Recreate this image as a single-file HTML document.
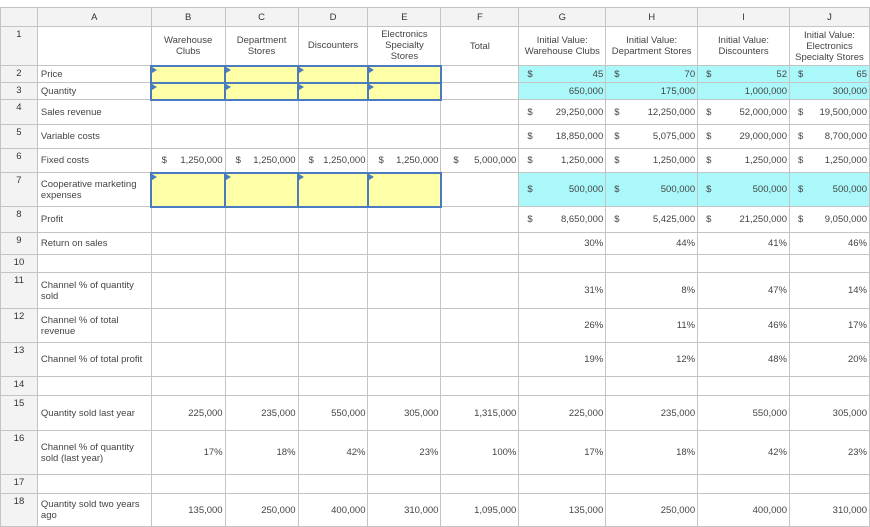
<!DOCTYPE html>
<html><head><meta charset="utf-8"><style>
body{margin:0;background:#fff;width:870px;height:526px;overflow:hidden;font-family:"Liberation Sans",Arial,sans-serif;font-size:9.5px;color:#444}
table{position:absolute;top:7px;left:0;border-collapse:collapse;table-layout:fixed}
td{border:1px solid #c4c4c4;padding:0 2px;vertical-align:middle;white-space:nowrap;overflow:hidden;line-height:11px}
tr.h td{background:#f3f3f3;text-align:center;color:#333;font-size:9.5px}
td.r{background:#f3f3f3;vertical-align:top;text-align:center;padding-top:2px;color:#333;font-size:9.5px}
td.l{white-space:normal;text-align:left;padding-left:3px}
td.c{text-align:center;white-space:normal}
td.n{text-align:right}
.m{display:flex;justify-content:space-between;padding-left:6px}
td.y{background:#ffffa8;border:2px solid #4a7bbf;position:relative}
td.y:before{content:"";position:absolute;left:0;top:0;border-left:5px solid #4a7bbf;border-top:3px solid transparent;border-bottom:3px solid transparent;height:0}
td.cy{background:#aaf8fa}
</style></head><body>
<table>
<colgroup><col style="width:37px"><col style="width:114px"><col style="width:74px"><col style="width:73px"><col style="width:70px"><col style="width:73px"><col style="width:78px"><col style="width:87px"><col style="width:92px"><col style="width:92px"><col style="width:80px"></colgroup>
<tr class="h" style="height:19px"><td></td><td>A</td><td>B</td><td>C</td><td>D</td><td>E</td><td>F</td><td>G</td><td>H</td><td>I</td><td>J</td></tr>
<tr style="height:39px"><td class="r">1</td><td></td><td class="c">Warehouse<br>Clubs</td><td class="c">Department<br>Stores</td><td class="c">Discounters</td><td class="c">Electronics<br>Specialty<br>Stores</td><td class="c">Total</td><td class="c">Initial Value:<br>Warehouse Clubs</td><td class="c">Initial Value:<br>Department Stores</td><td class="c">Initial Value:<br>Discounters</td><td class="c">Initial Value:<br>Electronics<br>Specialty Stores</td></tr>
<tr style="height:17px"><td class="r">2</td><td class="l">Price</td><td class="y"></td><td class="y"></td><td class="y"></td><td class="y"></td><td></td><td class="cy"><div class="m" style="padding-left:6px"><span>$</span><span>45</span></div></td><td class="cy"><div class="m" style="padding-left:6px"><span>$</span><span>70</span></div></td><td class="cy"><div class="m" style="padding-left:6px"><span>$</span><span>52</span></div></td><td class="cy"><div class="m" style="padding-left:6px"><span>$</span><span>65</span></div></td></tr>
<tr style="height:17px"><td class="r">3</td><td class="l">Quantity</td><td class="y"></td><td class="y"></td><td class="y"></td><td class="y"></td><td></td><td class="cy n">650,000</td><td class="cy n">175,000</td><td class="cy n">1,000,000</td><td class="cy n">300,000</td></tr>
<tr style="height:25px"><td class="r">4</td><td class="l">Sales revenue</td><td></td><td></td><td></td><td></td><td></td><td><div class="m"><span>$</span><span>29,250,000</span></div></td><td><div class="m"><span>$</span><span>12,250,000</span></div></td><td><div class="m"><span>$</span><span>52,000,000</span></div></td><td><div class="m"><span>$</span><span>19,500,000</span></div></td></tr>
<tr style="height:24px"><td class="r">5</td><td class="l">Variable costs</td><td></td><td></td><td></td><td></td><td></td><td><div class="m"><span>$</span><span>18,850,000</span></div></td><td><div class="m"><span>$</span><span>5,075,000</span></div></td><td><div class="m"><span>$</span><span>29,000,000</span></div></td><td><div class="m"><span>$</span><span>8,700,000</span></div></td></tr>
<tr style="height:24px"><td class="r">6</td><td class="l">Fixed costs</td><td><div class="m" style="padding-left:8px"><span>$</span><span>1,250,000</span></div></td><td><div class="m" style="padding-left:8px"><span>$</span><span>1,250,000</span></div></td><td><div class="m" style="padding-left:8px"><span>$</span><span>1,250,000</span></div></td><td><div class="m" style="padding-left:8px"><span>$</span><span>1,250,000</span></div></td><td><div class="m" style="padding-left:10px"><span>$</span><span>5,000,000</span></div></td><td><div class="m"><span>$</span><span>1,250,000</span></div></td><td><div class="m"><span>$</span><span>1,250,000</span></div></td><td><div class="m"><span>$</span><span>1,250,000</span></div></td><td><div class="m"><span>$</span><span>1,250,000</span></div></td></tr>
<tr style="height:34px"><td class="r">7</td><td class="l">Cooperative marketing expenses</td><td class="y"></td><td class="y"></td><td class="y"></td><td class="y"></td><td></td><td class="cy"><div class="m"><span>$</span><span>500,000</span></div></td><td class="cy"><div class="m"><span>$</span><span>500,000</span></div></td><td class="cy"><div class="m"><span>$</span><span>500,000</span></div></td><td class="cy"><div class="m"><span>$</span><span>500,000</span></div></td></tr>
<tr style="height:26px"><td class="r">8</td><td class="l">Profit</td><td></td><td></td><td></td><td></td><td></td><td><div class="m"><span>$</span><span>8,650,000</span></div></td><td><div class="m"><span>$</span><span>5,425,000</span></div></td><td><div class="m"><span>$</span><span>21,250,000</span></div></td><td><div class="m"><span>$</span><span>9,050,000</span></div></td></tr>
<tr style="height:22px"><td class="r">9</td><td class="l">Return on sales</td><td></td><td></td><td></td><td></td><td></td><td class="n">30%</td><td class="n">44%</td><td class="n">41%</td><td class="n">46%</td></tr>
<tr style="height:18px"><td class="r">10</td><td></td><td></td><td></td><td></td><td></td><td></td><td></td><td></td><td></td><td></td></tr>
<tr style="height:36px"><td class="r">11</td><td class="l">Channel % of quantity sold</td><td></td><td></td><td></td><td></td><td></td><td class="n">31%</td><td class="n">8%</td><td class="n">47%</td><td class="n">14%</td></tr>
<tr style="height:34px"><td class="r">12</td><td class="l">Channel % of total revenue</td><td></td><td></td><td></td><td></td><td></td><td class="n">26%</td><td class="n">11%</td><td class="n">46%</td><td class="n">17%</td></tr>
<tr style="height:34px"><td class="r">13</td><td class="l">Channel % of total profit</td><td></td><td></td><td></td><td></td><td></td><td class="n">19%</td><td class="n">12%</td><td class="n">48%</td><td class="n">20%</td></tr>
<tr style="height:19px"><td class="r">14</td><td></td><td></td><td></td><td></td><td></td><td></td><td></td><td></td><td></td><td></td></tr>
<tr style="height:35px"><td class="r">15</td><td class="l">Quantity sold last year</td><td class="n">225,000</td><td class="n">235,000</td><td class="n">550,000</td><td class="n">305,000</td><td class="n">1,315,000</td><td class="n">225,000</td><td class="n">235,000</td><td class="n">550,000</td><td class="n">305,000</td></tr>
<tr style="height:44px"><td class="r">16</td><td class="l">Channel % of quantity sold (last year)</td><td class="n">17%</td><td class="n">18%</td><td class="n">42%</td><td class="n">23%</td><td class="n">100%</td><td class="n">17%</td><td class="n">18%</td><td class="n">42%</td><td class="n">23%</td></tr>
<tr style="height:19px"><td class="r">17</td><td></td><td></td><td></td><td></td><td></td><td></td><td></td><td></td><td></td><td></td></tr>
<tr style="height:33px"><td class="r">18</td><td class="l">Quantity sold two years ago</td><td class="n">135,000</td><td class="n">250,000</td><td class="n">400,000</td><td class="n">310,000</td><td class="n">1,095,000</td><td class="n">135,000</td><td class="n">250,000</td><td class="n">400,000</td><td class="n">310,000</td></tr>
</table>
</body></html>
